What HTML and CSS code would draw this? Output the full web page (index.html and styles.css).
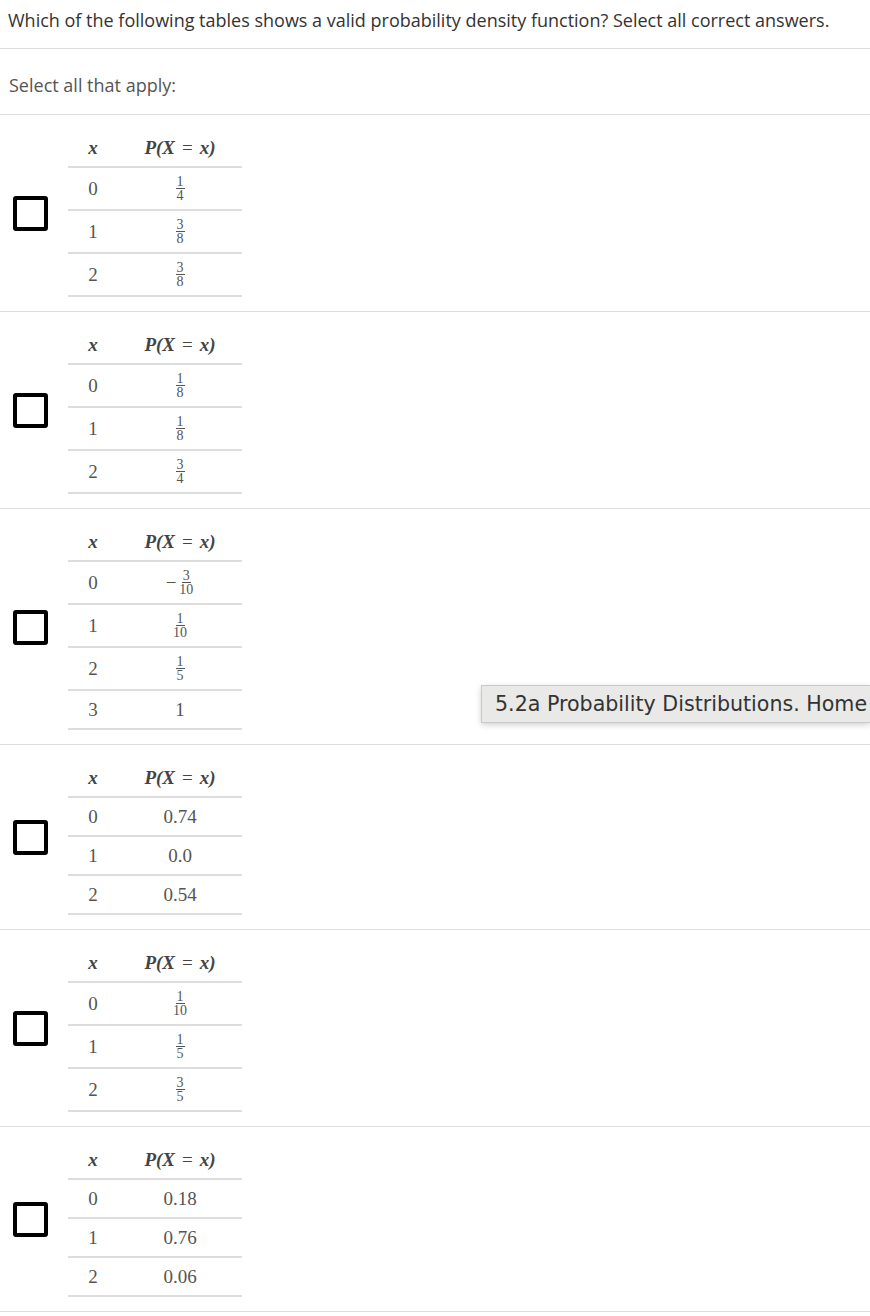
FILE: index.html
```html
<!DOCTYPE html>
<html>
<head>
<meta charset="utf-8">
<link rel="stylesheet" href="styles.css">
</head>
<body>
<div class="question">Which of the following tables shows a valid probability density function? Select all correct answers.</div>
<div class="instruct">Select all that apply:</div>

<div class="option">
  <span class="box"></span>
  <table class="pdf">
    <tr><th class="cx">x</th><th class="cp">P(X<span class="eq">=</span>x)</th></tr>
    <tr class="fr"><td>0</td><td><span class="frac"><span class="num">1</span><span class="den">4</span></span></td></tr>
    <tr class="fr"><td>1</td><td><span class="frac"><span class="num">3</span><span class="den">8</span></span></td></tr>
    <tr class="fr"><td>2</td><td><span class="frac"><span class="num">3</span><span class="den">8</span></span></td></tr>
  </table>
</div>

<div class="option">
  <span class="box"></span>
  <table class="pdf">
    <tr><th class="cx">x</th><th class="cp">P(X<span class="eq">=</span>x)</th></tr>
    <tr class="fr"><td>0</td><td><span class="frac"><span class="num">1</span><span class="den">8</span></span></td></tr>
    <tr class="fr"><td>1</td><td><span class="frac"><span class="num">1</span><span class="den">8</span></span></td></tr>
    <tr class="fr"><td>2</td><td><span class="frac"><span class="num">3</span><span class="den">4</span></span></td></tr>
  </table>
</div>

<div class="option">
  <span class="box"></span>
  <table class="pdf">
    <tr><th class="cx">x</th><th class="cp">P(X<span class="eq">=</span>x)</th></tr>
    <tr class="fr"><td>0</td><td><span class="minus">−</span><span class="frac"><span class="num">3</span><span class="den">10</span></span></td></tr>
    <tr class="fr"><td>1</td><td><span class="frac"><span class="num">1</span><span class="den">10</span></span></td></tr>
    <tr class="fr"><td>2</td><td><span class="frac"><span class="num">1</span><span class="den">5</span></span></td></tr>
    <tr class="dec"><td>3</td><td>1</td></tr>
  </table>
</div>

<div class="option">
  <span class="box"></span>
  <table class="pdf">
    <tr><th class="cx">x</th><th class="cp">P(X<span class="eq">=</span>x)</th></tr>
    <tr class="dec"><td>0</td><td>0.74</td></tr>
    <tr class="dec"><td>1</td><td>0.0</td></tr>
    <tr class="dec"><td>2</td><td>0.54</td></tr>
  </table>
</div>

<div class="option">
  <span class="box"></span>
  <table class="pdf">
    <tr><th class="cx">x</th><th class="cp">P(X<span class="eq">=</span>x)</th></tr>
    <tr class="fr"><td>0</td><td><span class="frac"><span class="num">1</span><span class="den">10</span></span></td></tr>
    <tr class="fr"><td>1</td><td><span class="frac"><span class="num">1</span><span class="den">5</span></span></td></tr>
    <tr class="fr"><td>2</td><td><span class="frac"><span class="num">3</span><span class="den">5</span></span></td></tr>
  </table>
</div>

<div class="option">
  <span class="box"></span>
  <table class="pdf">
    <tr><th class="cx">x</th><th class="cp">P(X<span class="eq">=</span>x)</th></tr>
    <tr class="dec"><td>0</td><td>0.18</td></tr>
    <tr class="dec"><td>1</td><td>0.76</td></tr>
    <tr class="dec"><td>2</td><td>0.06</td></tr>
  </table>
</div>

<div class="tooltip">5.2a Probability Distributions. Home</div>
</body>
</html>
```

FILE: styles.css
```css
html, body {
  margin: 0;
  padding: 0;
  overflow-x: hidden;
  background: #fff;
}
body {
  font-family: "Open Sans", "DejaVu Sans", sans-serif;
  position: relative;
  width: 870px;
}
.question {
  font-size: 18px;
  line-height: 24px;
  color: #333;
  padding: 8px 8px 16px 8px;
  border-bottom: 1px solid #ddd;
}
.instruct {
  font-size: 18px;
  line-height: 24px;
  color: #555;
  padding: 24px 9px 17px 9px;
  border-bottom: 1px solid #ddd;
}
.option {
  display: flex;
  align-items: center;
  padding: 15px 0 14px;
  border-bottom: 1px solid #ddd;
}
.box {
  box-sizing: border-box;
  width: 35px;
  height: 35px;
  border: 4px solid #000;
  border-radius: 3px;
  margin-left: 13px;
  margin-right: 20px;
  flex: none;
}
.pdf {
  border-collapse: collapse;
  font-family: "Liberation Serif", "Times New Roman", serif;
  font-size: 19px;
  color: #555;
}
.pdf th, .pdf td {
  padding: 0;
  text-align: center;
  vertical-align: middle;
  border-bottom: 2px solid #ddd;
}
.pdf th {
  height: 36px;
  font-style: italic;
  font-weight: bold;
  color: #444;
}
.cx { width: 50px; }
.cp { width: 124px; }
.eq {
  font-style: normal;
  font-weight: normal;
  padding: 0 7px;
}
.fr td { height: 41px; }
.dec td { height: 37px; }
.frac {
  display: inline-flex;
  flex-direction: column;
  align-items: center;
  vertical-align: middle;
  font-size: 14px;
  line-height: 11px;
}
.num {
  padding: 0 1px 1px;
  border-bottom: 1.5px solid #555;
}
.den {
  padding: 1px 1px 0;
}
.minus {
  vertical-align: middle;
  margin-right: 2px;
}
.tooltip {
  position: absolute;
  left: 481px;
  right: 0;
  top: 685px;
  height: 36px;
  line-height: 36px;
  padding: 0 0 0 13px;
  white-space: nowrap;
  overflow: hidden;
  background: #e9e9e7;
  border: 1px solid #c9c9c7;
  border-right: none;
  box-shadow: 0 2px 6px rgba(0, 0, 0, 0.18);
  font-family: "DejaVu Sans", sans-serif;
  font-size: 20.6px;
  color: #333;
}
```
